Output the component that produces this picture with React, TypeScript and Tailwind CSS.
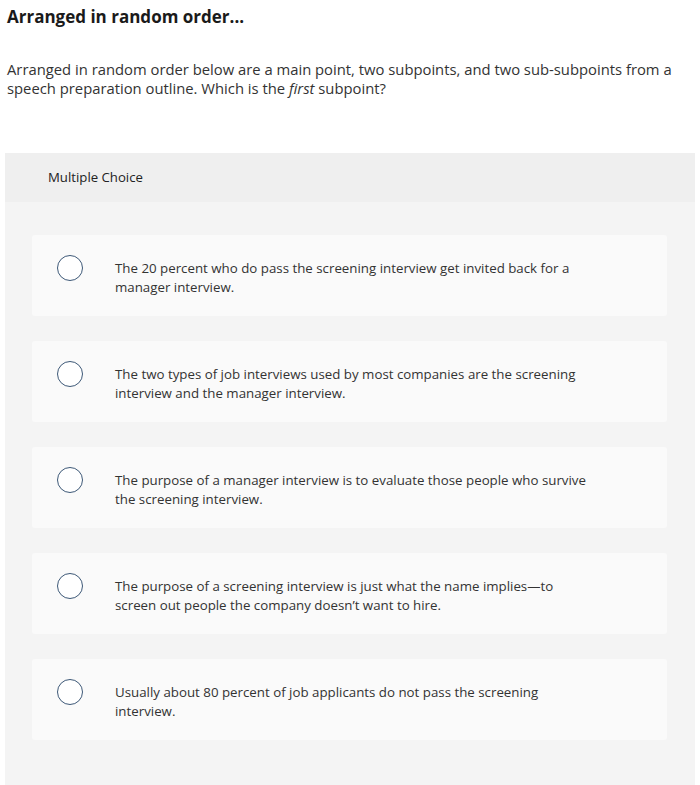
import React from 'react';

// each option is split where the reference wraps it
const options: string[][] = [
    ['The 20 percent who do pass the screening interview get invited back for a', 'manager interview.'],
    ['The two types of job interviews used by most companies are the screening', 'interview and the manager interview.'],
    ['The purpose of a manager interview is to evaluate those people who survive', 'the screening interview.'],
    ['The purpose of a screening interview is just what the name implies\u2014to', 'screen out people the company doesn\u2019t want to hire.'],
    ['Usually about 80 percent of job applicants do not pass the screening', 'interview.'],
];

const App: React.FC = () => {
    return (
        <div className="min-h-[785px] bg-white font-['Open_Sans',sans-serif] text-[#333]">
            <h1 className="px-[7px] pt-[5px] text-[17px] font-bold leading-[24px] text-[#1a1a1a]">
                Arranged in random order...
            </h1>

            <p className="mt-[31px] whitespace-nowrap px-[7px] text-[14.8px] leading-[19px] text-[#333]">
                Arranged in random order below are a main point, two subpoints, and two sub-subpoints from a
                <br />
                speech preparation outline. Which is the <em>first</em> subpoint?
            </p>

            {/* Question panel */}
            <div className="mx-[5px] mt-[55px] min-h-[632px] bg-[#f4f4f4]">
                <div className="flex h-[49px] items-center bg-[#efefef] pl-[43px] text-[13.2px] text-[#222]">
                    Multiple Choice
                </div>

                <div className="flex flex-col gap-[25px] pl-[27px] pr-[28px] pt-[33px]">
                    {options.map((lines, i) => (
                        <div
                            key={i}
                            className="flex h-[81px] items-start rounded-[3px] bg-[#fafafa] pt-[20px]"
                        >
                            <div className="ml-[25px] h-[26px] w-[26px] shrink-0 rounded-full border-[1.5px] border-[#3d5877] bg-white" />
                            <p className="ml-[32px] mt-[4px] whitespace-nowrap text-[13.3px] leading-[19px] text-[#333]">
                                {lines[0]}
                                <br />
                                {lines[1]}
                            </p>
                        </div>
                    ))}
                </div>
            </div>
        </div>
    );
};

export default App;
